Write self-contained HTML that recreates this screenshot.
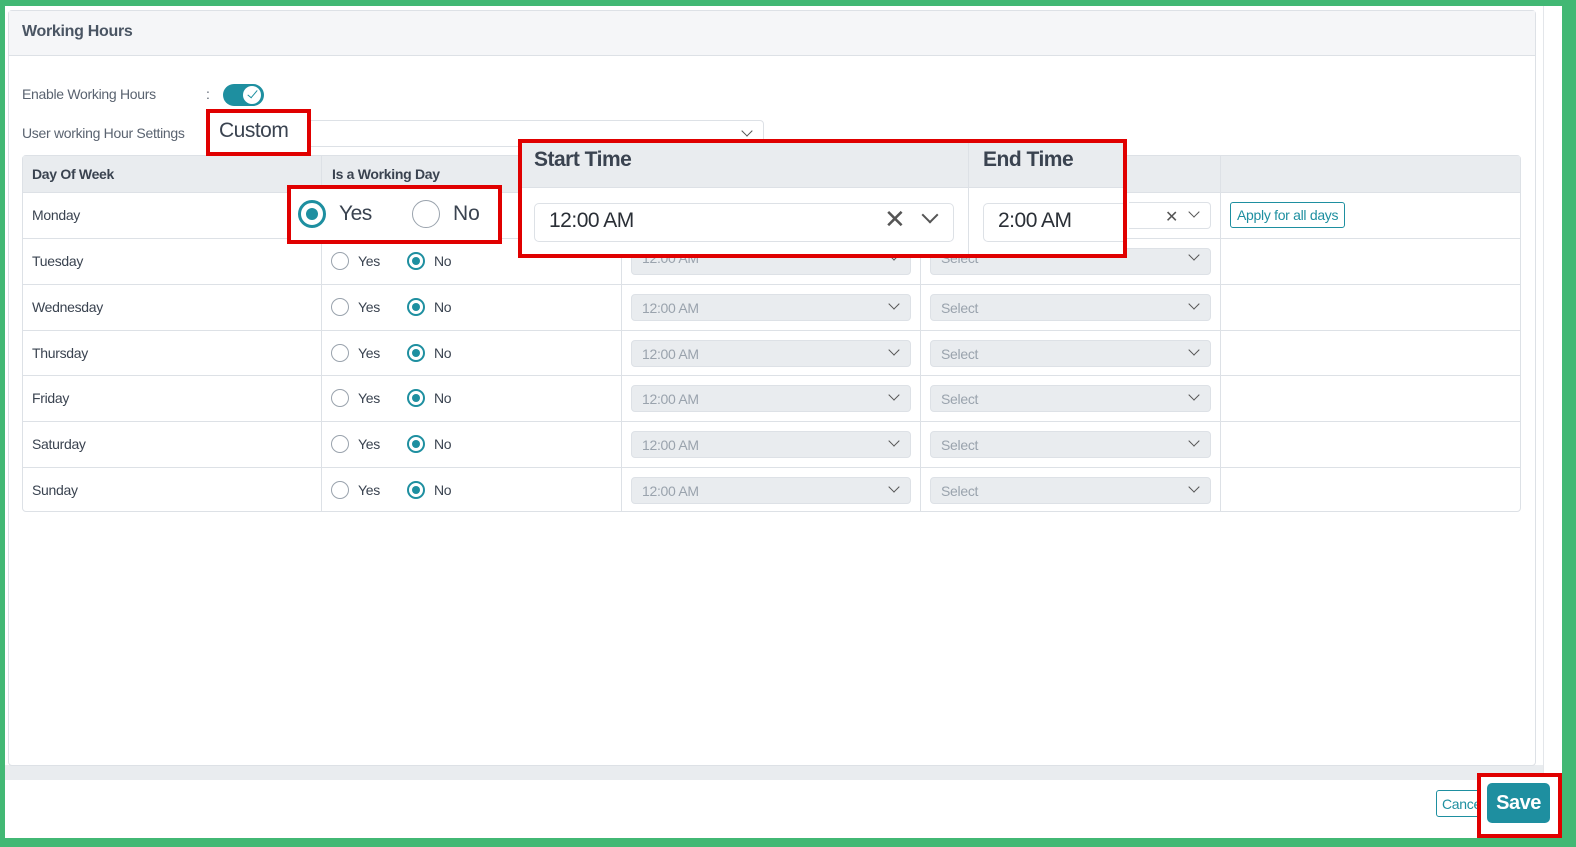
<!DOCTYPE html>
<html style="width:1576px;height:847px;overflow:hidden"><head><meta charset="utf-8"><style>
*{box-sizing:border-box;margin:0;padding:0}
body{width:1576px;height:847px;background:#42b874;font-family:"Liberation Sans",sans-serif;position:relative;overflow:hidden;color:#3a4350}
.a{position:absolute}
.inner{left:5px;top:6px;width:1557px;height:832px;background:#fff}
.gray{background:#e9ecef}
.t{font-size:14px;white-space:nowrap;letter-spacing:-0.3px}
.sel{background:#e9ecef;border:1px solid #dde1e6;border-radius:4px;height:27px;font-size:14px;color:#9aa3ad;padding:5px 10px;letter-spacing:-0.3px;overflow:hidden}
.chev{position:absolute;right:12px;top:5px;width:8px;height:8px;border-right:1.5px solid #555;border-bottom:1.5px solid #555;transform:rotate(45deg)}
.r{width:18px;height:18px;border-radius:50%;border:1.5px solid #9aa3ad;background:#fff}
.rc{border:2px solid #1e8fa0}
.rc::after{content:"";position:absolute;left:3px;top:3px;width:8px;height:8px;border-radius:50%;background:#1e8fa0}
.red{border:4px solid #e00000}
</style></head><body>
<div class="a inner"></div>
<div class="a" style="left:1543px;top:6px;width:1px;height:832px;background:#e3e6ea"></div>
<div class="a gray" style="left:5px;top:765px;width:1538px;height:15px"></div>
<div class="a" style="left:8px;top:10px;width:1528px;height:756px;border:1px solid #dde1e6;border-radius:4px;background:#fff"></div>
<div class="a" style="left:9px;top:11px;width:1526px;height:45px;background:#f5f6f8;border-bottom:1px solid #dde1e6"></div>
<div class="a t" style="left:22px;top:23px;font-size:16px;font-weight:bold;color:#4a5563">Working Hours</div>
<div class="a t" style="left:22px;top:86px;color:#5a6370">Enable Working Hours</div>
<div class="a t" style="left:206px;top:86px;color:#5a6370">:</div>
<div class="a" style="left:223px;top:84px;width:41px;height:22px;border-radius:11px;background:#1e8fa0"></div>
<div class="a" style="left:243px;top:86px;width:18px;height:18px;border-radius:50%;background:#fff"></div>
<div class="a" style="left:250px;top:88px;width:5px;height:10px;border-right:1.5px solid #1e8fa0;border-bottom:1.5px solid #1e8fa0;transform:rotate(40deg)"></div>
<div class="a t" style="left:22px;top:125px;color:#5a6370">User working Hour Settings</div>
<div class="a" style="left:208px;top:120px;width:556px;height:27px;border:1px solid #dde1e6;border-radius:4px"><div class="chev" style="top:6px"></div></div>
<!-- table -->
<div class="a" style="left:22px;top:155px;width:1499px;height:357px;border:1px solid #dde1e6;border-radius:4px"></div>
<div class="a" style="left:23px;top:156px;width:1497px;height:36px;background:#e9ecef"></div>
<div class="a t" style="left:32px;top:166px;font-weight:bold;color:#3a4350">Day Of Week</div>
<div class="a t" style="left:332px;top:166px;font-weight:bold;color:#3a4350">Is a Working Day</div>
<div class="a" style="left:321px;top:156px;width:1px;height:355px;background:#dde1e6"></div>
<div class="a" style="left:621px;top:156px;width:1px;height:355px;background:#dde1e6"></div>
<div class="a" style="left:920px;top:156px;width:1px;height:355px;background:#dde1e6"></div>
<div class="a" style="left:1220px;top:156px;width:1px;height:355px;background:#dde1e6"></div>
<div class="a" style="left:23px;top:192px;width:1497px;height:1px;background:#dde1e6"></div>
<div class="a" style="left:23px;top:238px;width:1497px;height:1px;background:#dde1e6"></div>
<div class="a" style="left:23px;top:284px;width:1497px;height:1px;background:#dde1e6"></div>
<div class="a" style="left:23px;top:330px;width:1497px;height:1px;background:#dde1e6"></div>
<div class="a" style="left:23px;top:375px;width:1497px;height:1px;background:#dde1e6"></div>
<div class="a" style="left:23px;top:421px;width:1497px;height:1px;background:#dde1e6"></div>
<div class="a" style="left:23px;top:467px;width:1497px;height:1px;background:#dde1e6"></div>
<div class="a t" style="left:32px;top:207px">Monday</div>
<div class="a" style="left:1129px;top:202px;width:82px;height:27px;border:1px solid #dde1e6;border-left:none;border-radius:0 4px 4px 0"><div class="a" style="left:36px;top:4px;font-size:16px;color:#555">✕</div><div class="chev"></div></div>
<div class="a t" style="left:1230px;top:202px;height:26px;border:1px solid #1e8fa0;border-radius:3px;padding:4px 6px;color:#1e8fa0">Apply for all days</div>

<div class="a t" style="left:32px;top:253px">Tuesday</div>
<div class="a t" style="left:32px;top:299px">Wednesday</div>
<div class="a t" style="left:32px;top:345px">Thursday</div>
<div class="a t" style="left:32px;top:390px">Friday</div>
<div class="a t" style="left:32px;top:436px">Saturday</div>
<div class="a t" style="left:32px;top:482px">Sunday</div>

<div class="a r" style="left:331px;top:252px"></div><div class="a t" style="left:358px;top:253px">Yes</div><div class="a r rc" style="left:407px;top:252px"></div><div class="a t" style="left:434px;top:253px">No</div>
<div class="a sel" style="left:631px;top:248px;width:280px;line-height:14px;padding-top:2px">12:00 AM<div class="chev" style="top:2px"></div></div>
<div class="a sel" style="left:930px;top:248px;width:281px;line-height:14px;padding-top:2px">Select<div class="chev" style="top:2px"></div></div>

<div class="a r" style="left:331px;top:298px"></div><div class="a t" style="left:358px;top:299px">Yes</div><div class="a r rc" style="left:407px;top:298px"></div><div class="a t" style="left:434px;top:299px">No</div>
<div class="a sel" style="left:631px;top:294px;width:280px">12:00 AM<div class="chev"></div></div>
<div class="a sel" style="left:930px;top:294px;width:281px">Select<div class="chev"></div></div>

<div class="a r" style="left:331px;top:344px"></div><div class="a t" style="left:358px;top:345px">Yes</div><div class="a r rc" style="left:407px;top:344px"></div><div class="a t" style="left:434px;top:345px">No</div>
<div class="a sel" style="left:631px;top:340px;width:280px">12:00 AM<div class="chev"></div></div>
<div class="a sel" style="left:930px;top:340px;width:281px">Select<div class="chev"></div></div>

<div class="a r" style="left:331px;top:389px"></div><div class="a t" style="left:358px;top:390px">Yes</div><div class="a r rc" style="left:407px;top:389px"></div><div class="a t" style="left:434px;top:390px">No</div>
<div class="a sel" style="left:631px;top:385px;width:280px">12:00 AM<div class="chev"></div></div>
<div class="a sel" style="left:930px;top:385px;width:281px">Select<div class="chev"></div></div>

<div class="a r" style="left:331px;top:435px"></div><div class="a t" style="left:358px;top:436px">Yes</div><div class="a r rc" style="left:407px;top:435px"></div><div class="a t" style="left:434px;top:436px">No</div>
<div class="a sel" style="left:631px;top:431px;width:280px">12:00 AM<div class="chev"></div></div>
<div class="a sel" style="left:930px;top:431px;width:281px">Select<div class="chev"></div></div>

<div class="a r" style="left:331px;top:481px"></div><div class="a t" style="left:358px;top:482px">Yes</div><div class="a r rc" style="left:407px;top:481px"></div><div class="a t" style="left:434px;top:482px">No</div>
<div class="a sel" style="left:631px;top:477px;width:280px">12:00 AM<div class="chev"></div></div>
<div class="a sel" style="left:930px;top:477px;width:281px">Select<div class="chev"></div></div>

<!-- callouts -->
<div class="a red" style="left:206px;top:109px;width:105px;height:47px;background:#fff"></div>
<div class="a" style="left:219px;top:119px;font-size:21px;color:#3a4350;letter-spacing:-0.5px">Custom</div>

<div class="a red" style="left:287px;top:185px;width:215px;height:59px;background:#fff"></div>
<div class="a" style="left:298px;top:200px;width:28px;height:28px;border-radius:50%;border:3px solid #1e8fa0;background:#fff"></div>
<div class="a" style="left:306px;top:208px;width:12px;height:12px;border-radius:50%;background:#1e8fa0"></div>
<div class="a" style="left:339px;top:202px;font-size:21px;letter-spacing:-0.5px">Yes</div>
<div class="a r" style="left:412px;top:200px;width:28px;height:28px"></div>
<div class="a" style="left:453px;top:202px;font-size:21px">No</div>

<div class="a red" style="left:518px;top:139px;width:609px;height:119px;background:#fff"></div>
<div class="a" style="left:522px;top:143px;width:601px;height:45px;background:#e9ecef;border-bottom:1px solid #dde1e6"></div>
<div class="a" style="left:968px;top:143px;width:1px;height:111px;background:#dde1e6"></div>
<div class="a" style="left:534px;top:148px;font-size:21px;font-weight:bold;color:#3a4350;letter-spacing:-0.5px">Start Time</div>
<div class="a" style="left:983px;top:148px;font-size:21px;font-weight:bold;color:#3a4350;letter-spacing:-0.5px">End Time</div>
<div class="a" style="left:534px;top:203px;width:420px;height:39px;border:1px solid #dde1e6;border-radius:5px"></div>
<div class="a" style="left:549px;top:209px;font-size:21px;color:#2a2f36;letter-spacing:-0.5px">12:00 AM</div>
<div class="a" style="left:884px;top:204px;font-size:26px;color:#555">✕</div>
<div class="a" style="left:924px;top:209px;width:12px;height:12px;border-right:2px solid #555;border-bottom:2px solid #555;transform:rotate(45deg)"></div>
<div class="a" style="left:983px;top:203px;width:140px;height:39px;border:1px solid #dde1e6;border-right:none;border-radius:5px 0 0 5px"></div>
<div class="a" style="left:998px;top:209px;font-size:21px;color:#2a2f36;letter-spacing:-0.5px">2:00 AM</div>

<!-- footer -->
<div class="a t" style="left:1436px;top:790px;width:50px;height:27px;border:1px solid #1e8fa0;border-radius:3px;padding:5px 5px;color:#1e8fa0;overflow:hidden">Cancel</div>
<div class="a red" style="left:1477px;top:773px;width:85px;height:65px;background:#fff"></div>
<div class="a" style="left:1487px;top:783px;width:63px;height:40px;background:#1e8fa0;border-radius:5px;color:#fff;font-weight:bold;font-size:20px;text-align:center;line-height:40px;letter-spacing:-0.5px">Save</div>
</body></html>
